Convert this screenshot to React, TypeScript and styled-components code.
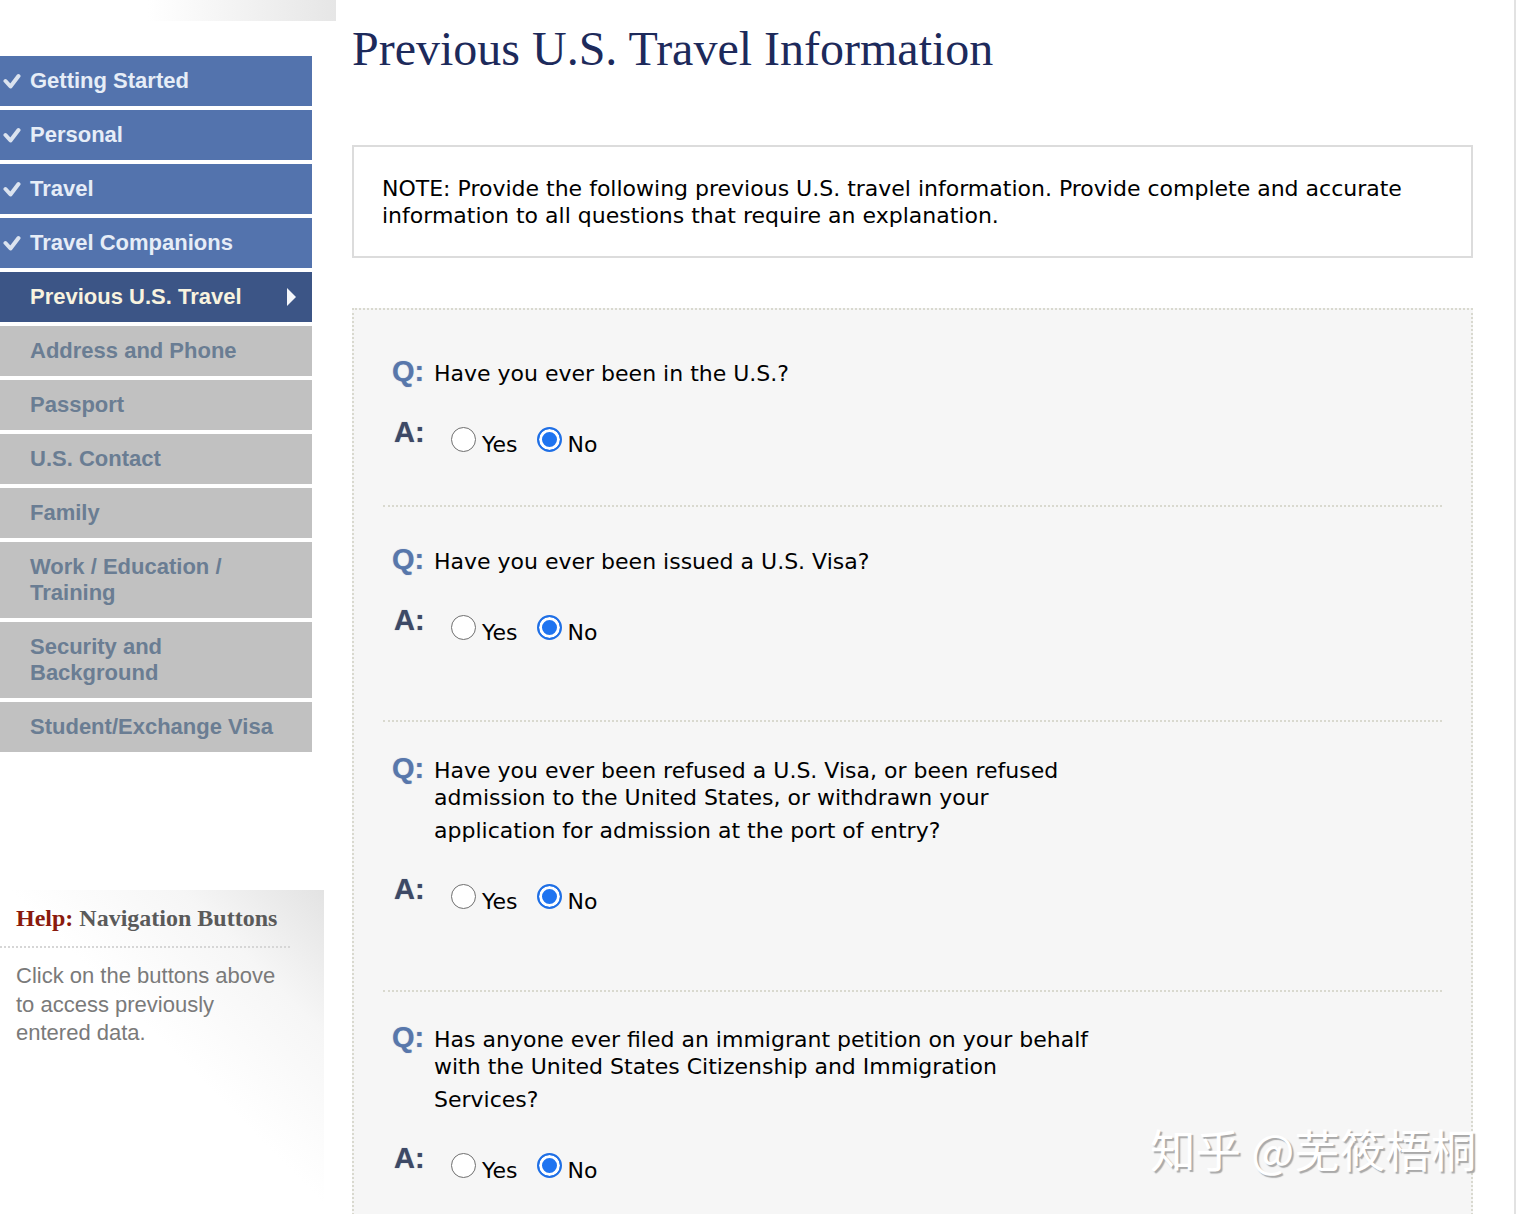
import React from 'react';
import styled, { createGlobalStyle } from 'styled-components';

type NavState = 'done' | 'active' | 'todo';

interface NavEntry {
  label: string;
  state: NavState;
}

interface Question {
  lines: string[];
  tail?: string;
  padTop: number;
  padBottom: number;
}

const navItems: NavEntry[] = [
  { label: 'Getting Started', state: 'done' },
  { label: 'Personal', state: 'done' },
  { label: 'Travel', state: 'done' },
  { label: 'Travel Companions', state: 'done' },
  { label: 'Previous U.S. Travel', state: 'active' },
  { label: 'Address and Phone', state: 'todo' },
  { label: 'Passport', state: 'todo' },
  { label: 'U.S. Contact', state: 'todo' },
  { label: 'Family', state: 'todo' },
  { label: 'Work / Education / Training', state: 'todo' },
  { label: 'Security and Background', state: 'todo' },
  { label: 'Student/Exchange Visa', state: 'todo' },
];

const questions: Question[] = [
  { lines: ['Have you ever been in the U.S.?'], padTop: 50, padBottom: 46 },
  { lines: ['Have you ever been issued a U.S. Visa?'], padTop: 41, padBottom: 73 },
  {
    lines: [
      'Have you ever been refused a U.S. Visa, or been refused',
      'admission to the United States, or withdrawn your',
    ],
    tail: 'application for admission at the port of entry?',
    padTop: 35,
    padBottom: 74,
  },
  {
    lines: [
      'Has anyone ever filed an immigrant petition on your behalf',
      'with the United States Citizenship and Immigration',
    ],
    tail: 'Services?',
    padTop: 34,
    padBottom: 60,
  },
];

const GlobalStyle = createGlobalStyle`
  html, body {
    margin: 0;
    padding: 0;
    background: #ffffff;
  }

  body {
    font-family: 'DejaVu Sans', Verdana, sans-serif;
    color: #000;
  }
`;

function CheckIcon() {
  return (
    <svg width="18" height="16" viewBox="0 0 18 16">
      <path
        d="M2.5 8 L7.5 13.5 L15.5 3"
        fill="none"
        stroke="#dbe3ef"
        strokeWidth="4"
        strokeLinecap="round"
        strokeLinejoin="round"
      />
    </svg>
  );
}

function ArrowIcon() {
  return (
    <svg width="10" height="18" viewBox="0 0 10 18">
      <path d="M1 0 L10 9 L1 18 Z" fill="#f4f6fa" />
    </svg>
  );
}

function App() {
  return (
    <>
      <GlobalStyle />
      <Page>
        <Sidebar>
          <HeaderFade />
          <Nav>
            {navItems.map((item) => (
              <NavItem key={item.label} $state={item.state}>
                <NavIcon>{item.state === 'done' && <CheckIcon />}</NavIcon>
                <NavLabel>{item.label}</NavLabel>
                {item.state === 'active' && (
                  <NavArrow>
                    <ArrowIcon />
                  </NavArrow>
                )}
              </NavItem>
            ))}
          </Nav>

          <HelpBox>
            <HelpTitle>
              <HelpTag>Help:</HelpTag> Navigation Buttons
            </HelpTitle>
            <HelpText>Click on the buttons above to access previously entered data.</HelpText>
          </HelpBox>
        </Sidebar>

        <Main>
          <Title>Previous U.S. Travel Information</Title>

          <NoteBox>
            NOTE: Provide the following previous U.S. travel information. Provide complete and
            accurate
            <br />
            information to all questions that require an explanation.
          </NoteBox>

          <Panel>
            {questions.map((q, i) => (
              <QBlock key={i} $padTop={q.padTop} $padBottom={q.padBottom}>
                <QRow>
                  <QMark>Q:</QMark>
                  <QText>
                    {q.lines.map((line) => (
                      <QLine key={line}>{line}</QLine>
                    ))}
                    {q.tail && <QTail>{q.tail}</QTail>}
                  </QText>
                </QRow>
                <ARow>
                  <AMark>A:</AMark>
                  <Choice>
                    <Radio type="radio" name={'q' + i} value="Y" />
                    <ChoiceText>Yes</ChoiceText>
                  </Choice>
                  <Choice>
                    <Radio type="radio" name={'q' + i} value="N" defaultChecked />
                    <ChoiceText>No</ChoiceText>
                  </Choice>
                </ARow>
              </QBlock>
            ))}
          </Panel>
        </Main>

        <Watermark>知乎 @芜筱梧桐</Watermark>
      </Page>
    </>
  );
}

const Page = styled.div`
  position: relative;
  display: flex;
  align-items: flex-start;
  width: 1514px;
  min-height: 1214px;
  border-right: 2px solid #e2e2e2;
`;

const Sidebar = styled.div`
  width: 336px;
  flex-shrink: 0;
  display: flex;
  flex-direction: column;
`;

const HeaderFade = styled.div`
  height: 21px;
  width: 336px;
  background: linear-gradient(to right, #ffffff 44%, #e6e6e6 100%);
`;

const Nav = styled.div`
  margin-top: 35px;
  width: 312px;
  display: flex;
  flex-direction: column;
  gap: 4px;
`;

const navColors = {
  done: { bg: '#5373ad', fg: '#e6edf7' },
  active: { bg: '#3c5586', fg: '#f8f3df' },
  todo: { bg: '#c1c1c1', fg: '#6a7d93' },
};

const NavItem = styled.div<{ $state: NavState }>`
  display: flex;
  align-items: center;
  min-height: 26px;
  padding: 12px 16px 12px 0;
  background: ${(p) => navColors[p.$state].bg};
  color: ${(p) => navColors[p.$state].fg};
  font-family: 'Liberation Sans', Arial, sans-serif;
  font-weight: bold;
  font-size: 22px;
  line-height: 26px;
`;

const NavIcon = styled.span`
  width: 30px;
  flex-shrink: 0;
  display: flex;
  align-items: center;
  padding-left: 3px;
  box-sizing: border-box;
`;

const NavLabel = styled.span`
  flex: 1;
  padding-right: 14px;
`;

const NavArrow = styled.span`
  display: flex;
`;

const HelpBox = styled.div`
  margin-top: 138px;
  width: 324px;
  min-height: 330px;
  padding-top: 14px;
  box-sizing: border-box;
  background: linear-gradient(225deg, #e3e3e3 0%, #f6f6f6 22%, #ffffff 48%);
`;

const HelpTitle = styled.div`
  width: 274px;
  padding: 0 0 14px 16px;
  border-bottom: 2px dotted #d6d6d6;
  font-family: 'Liberation Serif', 'Times New Roman', serif;
  font-weight: bold;
  font-size: 24px;
  line-height: 28px;
  color: #5a5a5a;
`;

const HelpTag = styled.span`
  color: #8a1a0c;
`;

const HelpText = styled.p`
  margin: 14px 0 0;
  padding: 0 34px 0 16px;
  font-family: 'Liberation Sans', Helvetica, Arial, sans-serif;
  font-size: 22px;
  line-height: 28.5px;
  color: #7a7a7a;
`;

const Main = styled.div`
  flex: 1;
  margin-left: 16px;
  padding-right: 41px;
`;

const Title = styled.h1`
  margin: 21px 0 0;
  font-family: 'Liberation Serif', 'Times New Roman', serif;
  font-weight: normal;
  font-size: 48px;
  line-height: 56px;
  color: #1d2a5b;
`;

const NoteBox = styled.div`
  margin-top: 68px;
  padding: 28px 28px 27px;
  border: 2px solid #dcdcdc;
  font-size: 22px;
  line-height: 27px;
  color: #000;
`;

const Panel = styled.div`
  margin-top: 50px;
  padding: 0 29px;
  border: 2px dotted #d9d9cf;
  background: #f6f6f6;
`;

const QBlock = styled.div<{ $padTop: number; $padBottom: number }>`
  padding: ${(p) => p.$padTop}px 0 ${(p) => p.$padBottom}px 9px;
  border-bottom: 2px dotted #d9d9cf;

  &:last-child {
    border-bottom: none;
  }
`;

const QRow = styled.div`
  display: flex;
  align-items: baseline;
`;

const Mark = styled.span`
  width: 42px;
  flex-shrink: 0;
  font-family: 'Liberation Sans', Arial, sans-serif;
  font-weight: bold;
  font-size: 29px;
  line-height: 22px;
`;

const QMark = styled(Mark)`
  color: #5877ab;
  text-shadow: 0 0 1px rgba(88, 119, 171, 0.6);
`;

const AMark = styled(Mark)`
  align-self: flex-start;
  margin-top: 2px;
  padding-left: 2px;
  box-sizing: border-box;
  color: #3d4966;
  text-shadow: 0 0 1px rgba(61, 73, 102, 0.6);
`;

const QText = styled.div`
  font-size: 22px;
  line-height: 27px;
`;

const QLine = styled.div``;

const QTail = styled.div`
  margin-top: 6px;
`;

const ARow = styled.div`
  display: flex;
  align-items: center;
  height: 40px;
  margin-top: 32px;
`;

const Choice = styled.label`
  display: flex;
  align-items: center;
  margin-left: 17px;

  & + & {
    margin-left: 19px;
  }
`;

const Radio = styled.input`
  appearance: none;
  -webkit-appearance: none;
  width: 25px;
  height: 25px;
  margin: 0 6px 0 0;
  border: 1.5px solid #6f6f6f;
  border-radius: 50%;
  background: #ffffff;
  box-sizing: border-box;

  &:checked {
    border: 2.5px solid #1f6fe5;
    background: #1f74f0;
    box-shadow: inset 0 0 0 3px #ffffff;
  }
`;

const ChoiceText = styled.span`
  margin-top: 10px;
  font-size: 22px;
  line-height: 27px;
`;

const Watermark = styled.div`
  position: absolute;
  left: 1150px;
  top: 1118px;
  font-family: 'Noto Sans CJK SC', sans-serif;
  font-size: 45.5px;
  line-height: 60px;
  color: #ffffff;
  text-shadow: 2px 2px 1px #a9a9a9;
  pointer-events: none;
  white-space: nowrap;
`;

export default App;
